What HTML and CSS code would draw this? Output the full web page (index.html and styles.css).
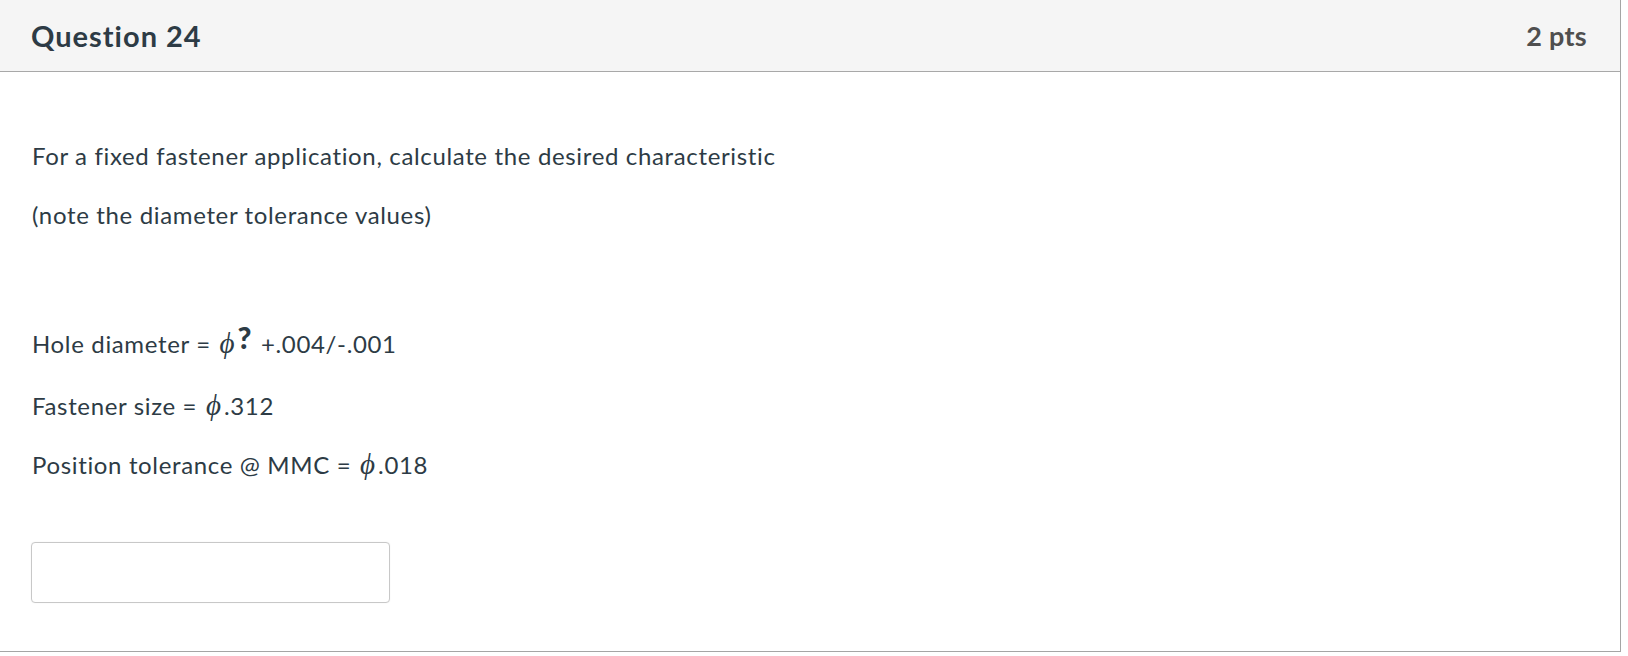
FILE: index.html
```html
<!DOCTYPE html>
<html>
<head>
<meta charset="utf-8">
<link rel="stylesheet" href="styles.css">
</head>
<body>
<div class="card">
  <div class="card-header">
    <span class="title">Question 24</span>
    <span class="points">2 pts</span>
  </div>
  <div class="card-body">
    <p class="line">For a fixed fastener application, calculate the desired characteristic</p>
    <p class="line">(note the diameter tolerance values)</p>
    <p class="line">&nbsp;</p>
    <p class="line formula">Hole diameter = <span class="phi">ϕ</span><span class="q">?</span> +.004/-.001</p>
    <p class="line">Fastener size = <span class="phi">ϕ</span>.312</p>
    <p class="line">Position tolerance @ MMC = <span class="phi">ϕ</span>.018</p>
    <div class="answer"><input class="answer-input" type="text"></div>
  </div>
</div>
</body>
</html>
```

FILE: styles.css
```css
html, body {
  margin: 0;
  padding: 0;
  background: #ffffff;
}

body {
  font-family: Lato, "Noto Sans", sans-serif;
  color: #2d3b45;
}

.card {
  width: 1620px;
  height: 651px;
  border-right: 1px solid #a5a5a5;
  border-bottom: 1px solid #a5a5a5;
  display: flex;
  flex-direction: column;
  background: #ffffff;
}

.card-header {
  height: 71px;
  flex: none;
  background: #f5f5f5;
  border-bottom: 1px solid #a8a8a8;
  display: flex;
  align-items: center;
  justify-content: space-between;
  padding: 0 33px 0 31px;
}

.title {
  font-size: 29px;
  font-weight: 700;
  letter-spacing: 1px;
  color: #2d3b45;
}

.points {
  font-size: 27px;
  font-weight: 700;
  letter-spacing: 0.3px;
  color: #4f4f4f;
}

.card-body {
  padding: 67px 31px 0 32px;
}

.line {
  margin: 0 0 26px 0;
  font-size: 24px;
  letter-spacing: 0.65px;
  line-height: 33px;
}

.formula {
  padding: 6px 0 3px;
}

.phi {
  font-family: "Liberation Serif", "DejaVu Serif", serif;
  font-style: italic;
  font-size: 29px;
  letter-spacing: 0;
  margin: 0 3px 0 2px;
}

.q {
  font-size: 30px;
  font-weight: 900;
  vertical-align: 4px;
  line-height: 1;
  margin-right: 2px;
}

.answer {
  margin-top: 61px;
}

.answer-input {
  box-sizing: border-box;
  display: block;
  width: 359px;
  height: 61px;
  margin: 0 0 0 -1px;
  border: 1px solid #c8c8c8;
  border-radius: 4px;
  background: #ffffff;
  box-shadow: 0 0 2px rgba(0, 0, 0, 0.06);
  font: inherit;
  padding: 0 10px;
}
```
